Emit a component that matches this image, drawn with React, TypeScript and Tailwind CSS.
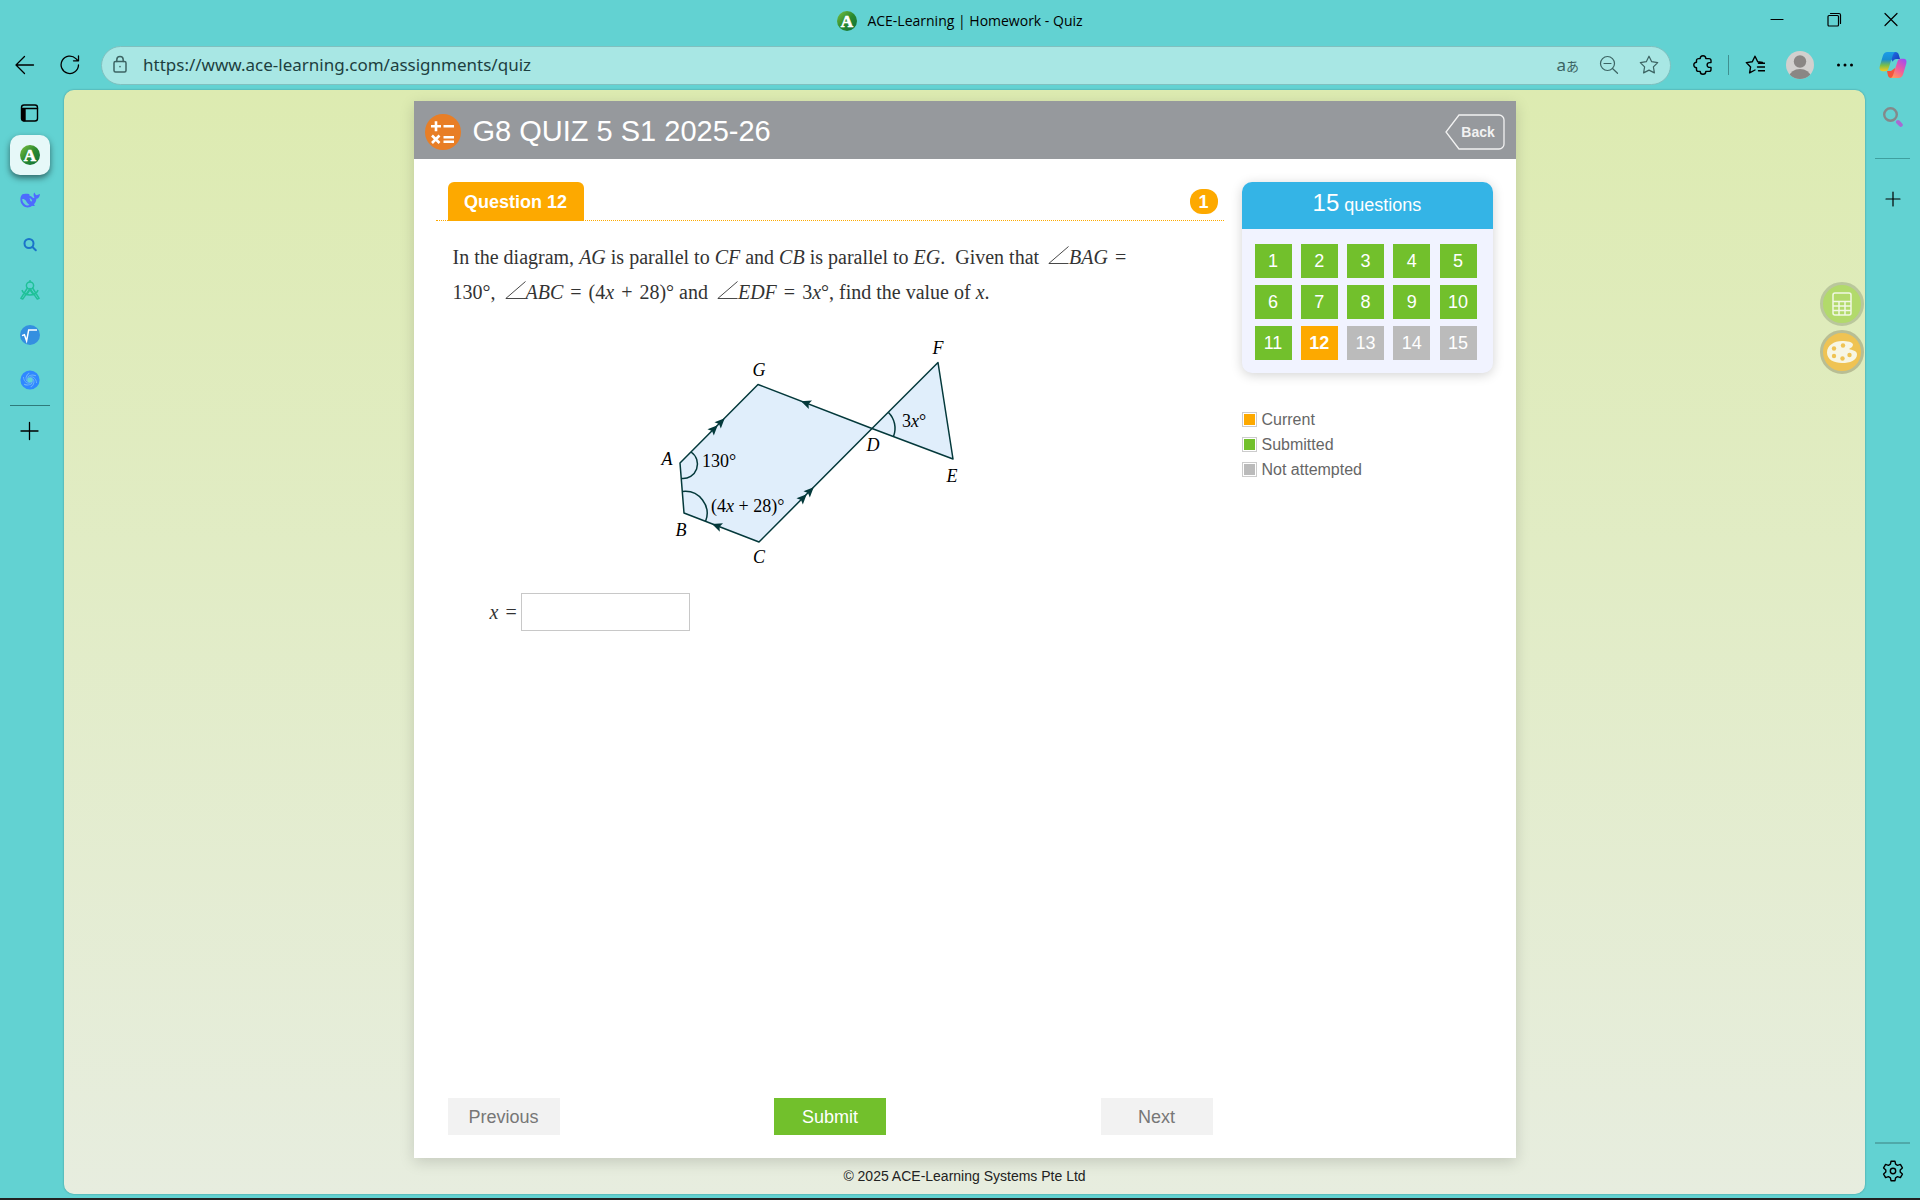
import React from "react";
import type { ReactNode } from "react";

type IconProps = { className?: string; children: ReactNode; box?: number; stroke?: number };

function Line({ className = "size-5", children, box = 20, stroke = 1.2 }: IconProps) {
  return (
    <svg
      className={className}
      viewBox={`0 0 ${box} ${box}`}
      fill="none"
      stroke="currentColor"
      strokeWidth={stroke}
      strokeLinecap="round"
      strokeLinejoin="round"
      aria-hidden="true"
    >
      {children}
    </svg>
  );
}

function AceLogo() {
  return (
    <svg className="size-5" viewBox="0 0 20 20" aria-hidden="true">
      <defs>
        <linearGradient id="ace" x1="0" y1="0" x2="1" y2="1">
          <stop offset="0" stopColor="#7cc142" />
          <stop offset="0.5" stopColor="#2b8a2e" />
          <stop offset="1" stopColor="#0b6e3c" />
        </linearGradient>
      </defs>
      <circle cx="10" cy="10" r="10" fill="url(#ace)" />
      <text
        x="10"
        y="15.5"
        textAnchor="middle"
        fontFamily="'Liberation Serif', serif"
        fontWeight="700"
        fontSize="17"
        fill="#ffffff"
        stroke="#ffffff"
        strokeWidth="0.6"
      >
        A
      </text>
    </svg>
  );
}

function Whale() {
  return (
    <svg className="size-5" viewBox="0 0 20 20" aria-hidden="true">
      <path
        fill="#4d6bfe"
        d="M2.400 4.300C.5 6.200 0 8.800.6 11.500c.8 3.500 3.700 6 7.200 5.900 1.700 0 3.100-.6 4.300-1.600.9.4 1.900.4 2.600 0 .3-.4-.2-.8-.9-1.200 1.500-1.600 2.400-3.500 2.600-5.800 1.900-.2 3.200-1.700 3.500-4.300 0-.4-.3-.5-.7-.3-.9.6-1.700.6-2.600 1.100-.9-.5-1.500-1.100-1.800-2.100-.2-.5-.6-.5-.9 0-.6 1.300-.4 2.900.7 4.100l-1.300 1c-1.300-1.300-2.300-2.200-4-2.700.3-.7.200-1.300-.3-1.500-2.300-.4-4.800-.7-6.600.2z"
      />
      <path
        fill="#62d2d2"
        d="M2.200 9c1.500-.3 2.600.3 3.500 1.600 1.100 1.700 2 3.500 3.900 4.500-1.300.6-2.700.5-4-.2C3.500 13.700 2.200 11.500 2.200 9zM9.300 8.300c1.100-.2 2.200.7 2.700 1.900.2.700-.1 1.300-.7 1.200-.8-.1-1.200-.8-1.200-1.600 0-.6-.3-1.100-.8-1.500z"
      />
    </svg>
  );
}

function Compass() {
  return (
    <Line stroke={1.5} className="size-5 text-[#1fc198]">
      <circle cx="10" cy="5.500" r="3.600" />
      <path d="M10 .6v1.200M7.400 8 .9 18.400l1.800.7L10 8.600l7.300 10.500 1.800-.7L12.600 8M2.200 10.600c1.200 2.700 4.300 4.300 7.800 4.300s6.600-1.600 7.800-4.300M7 14.100l3-4.300 3 4.300" />
    </Line>
  );
}

function RootIcon() {
  return (
    <svg className="size-5" viewBox="0 0 20 20" aria-hidden="true">
      <circle cx="10" cy="10" r="10" fill="#348fe0" />
      <path d="M2 10.600 4.400 9.800 6.600 16 8.700 4.900H17" fill="none" stroke="#fff" strokeWidth="1.500" />
    </svg>
  );
}

function Swirl() {
  return (
    <svg className="size-5" viewBox="0 0 20 20" aria-hidden="true">
      <circle cx="10" cy="10" r="6.200" fill="none" stroke="#2f88ff" strokeWidth="6.800" />
      {[0, 60, 120, 180, 240, 300].map((a) => (
        <path
          key={a}
          d="M10 7.200C12.500 6 16 7.800 16.600 13"
          transform={`rotate(${a} 10 10)`}
          fill="none"
          stroke="#6fb6f5"
          strokeWidth="0.900"
        />
      ))}
    </svg>
  );
}

function Copilot() {
  return (
    <svg className="size-7" viewBox="0 0 28 28" aria-hidden="true">
      <defs>
        <linearGradient id="cpA" x1="0" y1="0" x2="0" y2="1">
          <stop offset="0" stopColor="#1b9be8" />
          <stop offset="0.400" stopColor="#1a8fd0" />
          <stop offset="0.700" stopColor="#7bbf4a" />
          <stop offset="1" stopColor="#fbc81c" />
        </linearGradient>
        <linearGradient id="cpB" x1="0.800" y1="0" x2="0.200" y2="1">
          <stop offset="0" stopColor="#a24df0" />
          <stop offset="0.500" stopColor="#ee5aa0" />
          <stop offset="1" stopColor="#ff9a5a" />
        </linearGradient>
        <linearGradient id="cpC" x1="0" y1="0" x2="1" y2="1">
          <stop offset="0" stopColor="#1e78e6" />
          <stop offset="1" stopColor="#1731b8" />
        </linearGradient>
      </defs>
      <path fill="url(#cpC)" d="M13 1h3.500c1.700 0 2.800 1 3.300 2.800L21 8h-3.500c-2 0-3 .8-3.700 2.800L12 8z" />
      <path fill="#f2553d" d="M8 20h4l4-3 1 6-1.500 4H12c-1.700 0-2.600-1-3.100-2.700z" />
      <path
        fill="url(#cpA)"
        d="M8.500 1h8c-1.700.5-2.300 2-3 4.200L9.700 17c-.7 2.200-1.700 3.200-3.700 3.200H3.500C1 20.200 0 18.200.7 15.500L3.800 5C4.600 2.400 6 1 8.500 1z"
      />
      <path
        fill="url(#cpB)"
        d="M19.500 27h-8c1.700-.5 2.300-2 3-4.200L18.300 11c.7-2.200 1.700-3.200 3.700-3.200h2.500c2.500 0 3.500 2 2.800 4.700L24.200 23c-.8 2.600-2.200 4-4.700 4z"
      />
    </svg>
  );
}

const starPath = "M10 1.200l2.700 5.500 6 .9-4.300 4.300 1 6L10 15.100l-5.400 2.800 1-6L1.300 7.600l6-.9z";

function TitleBar() {
  return (
    <div className="grid h-10 grid-cols-[1fr_auto_1fr] items-center">
      <span />
      <div className="flex items-center gap-2.5 pt-0.5 text-sm text-black">
        <AceLogo />
        <span>ACE-Learning | Homework - Quiz</span>
      </div>
      <div className="flex justify-end">
        <button aria-label="Minimize" className="flex w-[57px] justify-center">
          <Line className="size-4" box={16}><path d="M2 7.500h12" /></Line>
        </button>
        <button aria-label="Restore" className="flex w-[57px] justify-center">
          <Line className="size-4" box={16}>
            <rect x="2" y="3.500" width="10.500" height="10.500" rx="1" />
            <path d="M4.500 1.500h8.500a1.500 1.500 0 0 1 1.500 1.500v8.500" />
          </Line>
        </button>
        <button aria-label="Close" className="flex w-[58px] justify-center">
          <Line className="size-4" box={16}><path d="M2 1.500l12 12M14 1.500l-12 12" /></Line>
        </button>
      </div>
    </div>
  );
}

function Toolbar() {
  return (
    <div className="flex h-[50px] items-center pr-[13px]">
      <button aria-label="Go back" className="flex w-[50px] justify-center">
        <Line stroke={1.300}><path d="M18.500 10H1.500M9.500 1.500 1 10l8.500 8.500" /></Line>
      </button>
      <button aria-label="Refresh" className="flex w-10 justify-center">
        <Line stroke={1.300}><path d="M18.500 10a8.700 8.700 0 1 1-2.600-6.400l2 2M18.500.8v5h-5" /></Line>
      </button>
      <div className="ml-[11px] flex h-[39px] flex-1 items-center rounded-full border border-[#7fc0bf] bg-[#a8e7e4] pl-2 pr-[11px] text-[#3c6463]">
        <Line stroke={1.500}>
          <rect x="4" y="6.500" width="12" height="10.500" rx="1.500" />
          <path d="M6.800 6.500V4.800a3.200 3.200 0 0 1 6.400 0v1.700M10 11.500v.2" />
        </Line>
        <input
          aria-label="Address"
          defaultValue="https://www.ace-learning.com/assignments/quiz"
          className="ml-[13px] h-8 min-w-0 flex-1 bg-transparent pb-0.5 font-['Noto_Sans',sans-serif] text-[17px] leading-7 text-[#1d3f3f] outline-none"
        />
        <div className="flex items-center gap-5">
          <button aria-label="Translate" className="flex items-baseline font-['Noto_Sans',sans-serif] text-[17px] leading-5">
            a<span className="font-['Noto_Sans_CJK_JP',sans-serif] text-[13px] leading-5">あ</span>
          </button>
          <button aria-label="Zoom out">
            <Line><circle cx="8.500" cy="8.500" r="7" /><path d="M13.500 13.500l5 4.800M5 8.500h7" /></Line>
          </button>
          <button aria-label="Add to favorites"><Line><path d={starPath} /></Line></button>
        </div>
      </div>
      <div className="flex items-center pl-[22px]">
        <button aria-label="Extensions">
          <Line stroke={1.400}>
            <path d="M7.200 3.600a2.800 2.800 0 0 1 5.600 0H16a2 2 0 0 1 2 2v2h-1.500a2.400 2.400 0 0 0 0 4.800H18v2a2 2 0 0 1-2 2h-3.200a2.800 2.800 0 0 1-5.600 0H5.500a2 2 0 0 1-2-2v-1.700a2.700 2.700 0 0 1 0-5.400V5.600a2 2 0 0 1 2-2z" />
          </Line>
        </button>
        <span className="ml-[15px] mr-4 h-5 w-px bg-[#3f9090]" />
        <button aria-label="Favorites">
          <Line stroke={1.400}>
            <path d="M13.500 8.200H20M12.500 12H20M13.500 15.800H20M17.500 7.500l-4.800-.8L10 1.200 7.300 6.700l-6 .9 4.300 4.300-1 6L10 15" />
          </Line>
        </button>
        <button aria-label="Profile" className="ml-[21px]">
          <svg className="size-7" viewBox="0 0 28 28" aria-hidden="true">
            <clipPath id="face"><circle cx="14" cy="14" r="14" /></clipPath>
            <g clipPath="url(#face)">
              <rect width="28" height="28" fill="#d2d0ce" />
              <circle cx="14" cy="10.500" r="6.200" fill="#8a8684" />
              <ellipse cx="14" cy="25.500" rx="10.500" ry="7.500" fill="#8a8684" />
            </g>
          </svg>
        </button>
        <button aria-label="Settings and more" className="ml-[21px]">
          <svg className="size-5" viewBox="0 0 20 20" fill="currentColor" aria-hidden="true">
            <circle cx="3.500" cy="10" r="1.500" /><circle cx="10" cy="10" r="1.500" /><circle cx="16.500" cy="10" r="1.500" />
          </svg>
        </button>
        <button aria-label="Copilot" className="ml-6"><Copilot /></button>
      </div>
    </div>
  );
}

function LeftRail() {
  const item = "flex h-[45px] w-full items-center justify-center";
  return (
    <nav aria-label="Tabs" className="flex w-16 shrink-0 flex-col items-center pr-1">
      <button aria-label="Tab actions" className={item}>
        <Line stroke={1.400}>
          <rect x="1.500" y="2" width="16" height="16" rx="2.500" />
          <path d="M5.500 5.500H17.500" />
          <path d="M2 5.500h3v12H3.500A1.500 1.500 0 0 1 2 16z" fill="currentColor" />
        </Line>
      </button>
      <button aria-label="ACE-Learning" className="flex size-10 items-center justify-center rounded-[10px] bg-[#e6f8f8] shadow-[0_3px_6px_rgba(0,0,0,0.5)]">
        <AceLogo />
      </button>
      <button aria-label="DeepSeek" className="mt-0.5 flex h-[45px] items-center"><Whale /></button>
      <button aria-label="Search" className={item}>
        <Line stroke={2} className="size-5 text-[#1b74c9]"><circle cx="9" cy="8.500" r="4.500" /><path d="M12.500 12l3.300 3.300" /></Line>
      </button>
      <button aria-label="Geometry" className={item}><Compass /></button>
      <button aria-label="Equations" className={item}><RootIcon /></button>
      <button aria-label="Assistant" className={item}><Swirl /></button>
      <span className="mt-[3px] h-px w-10 bg-[#2f7a7a]" />
      <button aria-label="New tab" className="mt-[15px]">
        <Line stroke={1.300}><path d="M9.500 1.500v17M1 10h17" /></Line>
      </button>
    </nav>
  );
}

function RightRail() {
  return (
    <aside aria-label="Sidebar" className="flex w-[55px] shrink-0 flex-col items-center">
      <button aria-label="Sidebar search" className="mt-[17px]">
        <svg className="size-5" viewBox="0 0 20 20" fill="none" aria-hidden="true">
          <circle cx="7.500" cy="7.500" r="6.300" stroke="#84898a" strokeWidth="2.400" />
          <path d="M15 15l2.800 2.800" stroke="#a66bd3" strokeWidth="4" strokeLinecap="round" />
        </svg>
      </button>
      <span className="mt-[31px] h-px w-[35px] bg-[#3f9f9f]" />
      <button aria-label="Customize sidebar" className="mt-8">
        <Line className="size-4" box={16}><path d="M8 1v14M1 8h14" /></Line>
      </button>
      <span className="mt-auto h-0.5 w-[35px] bg-[#4fa9a9]" />
      <button aria-label="Settings" className="mb-3 mt-4">
        <Line className="size-[22px]" box={22} stroke={1.400}>
          <path d="M9 1.300h4l.6 2.900 1.900 1.100 2.900-.9 2 3.500-2.200 2v2.200l2.200 2-2 3.500-2.900-.9-1.900 1.100-.6 2.900H9l-.6-2.900-1.900-1.100-2.900.9-2-3.500 2.200-2V9.900l-2.200-2 2-3.500 2.900.9 1.900-1.100z" />
          <circle cx="11" cy="11" r="2.700" />
        </Line>
      </button>
    </aside>
  );
}

function Angle({ children }: { children: string }) {
  return (
    <span className="whitespace-nowrap">
      <svg className="ml-1 inline-block h-[18px] w-[21px] align-baseline" viewBox="0 0 21 18" fill="none" stroke="#333" strokeWidth="0.900" role="img" aria-label="angle">
        <path d="M20.500.500.800 17.500H20.500" />
      </svg>
      <i>{children}</i>
    </span>
  );
}

function Op({ children }: { children: string }) {
  return <span className="mx-0.5">{children}</span>;
}

function Arrow({ x, y, a }: { x: number; y: number; a: number }) {
  return <path d="M1 0-9-4.500-7 0-9 4.500z" fill="#04393b" transform={`translate(${x} ${y}) rotate(${a})`} />;
}

const vertexLabels: [string, number, number][] = [
  ["G", 119, 46],
  ["F", 298, 24],
  ["A", 27, 135],
  ["B", 41, 206],
  ["C", 119, 233],
  ["D", 233, 121],
  ["E", 312, 152],
];

function Diagram() {
  return (
    <svg
      className="mx-auto mt-5 block h-[250px] w-[380px] font-['Liberation_Serif',serif]"
      viewBox="0 0 380 250"
      role="img"
      aria-label="Polygon AGDCB joined at D to triangle DFE"
    >
      <g fill="#e0eefb" stroke="#04393b" strokeWidth="1.500" strokeLinejoin="round">
        <path d="M40 133 118 54.500 232 98.500 119 212 44 183z" />
        <path d="M232 98.500 298 32.500 313 129z" />
        <g fill="none">
          <path d="M51 122a14.500 14.500 0 0 1-9.500 26.500" />
          <path d="M42.500 161.500a22 22 0 0 1 23 30" />
          <path d="M248.500 82.500a22.500 22.500 0 0 1 5 24" />
        </g>
      </g>
      <Arrow x={77} y={96} a={-45} />
      <Arrow x={84} y={89} a={-45} />
      <Arrow x={162} y={71.500} a={-159} />
      <Arrow x={73} y={194.300} a={-159} />
      <Arrow x={166} y={165} a={-45} />
      <Arrow x={173} y={158} a={-45} />
      <g fill="#000" fontSize="18">
        <g fontStyle="italic" textAnchor="middle">
          {vertexLabels.map(([t, x, y]) => (
            <text key={t} x={x} y={y}>{t}</text>
          ))}
        </g>
        <text x="62" y="137">130°</text>
        <text x="71" y="182">(4<tspan fontStyle="italic">x</tspan> + 28)°</text>
        <text x="262" y="97">3<tspan fontStyle="italic">x</tspan>°</text>
      </g>
    </svg>
  );
}

function Question() {
  return (
    <section className="flex min-w-0 flex-1 flex-col">
      <div className="flex h-[39px] items-stretch justify-between border-b border-dotted border-[#fda900] pl-3 pr-1.5">
        <h2 className="-mb-px flex w-[136px] items-center justify-center rounded-t-md bg-[#fda900] text-lg font-bold text-white">
          Question 12
        </h2>
        <span className="mt-[7px] flex h-[25px] w-7 items-center justify-center rounded-xl bg-[#fda900] text-lg font-bold text-white">1</span>
      </div>
      <p className="mt-[19px] pl-[17px] pr-16 font-['Liberation_Serif',serif] text-xl leading-[35px] text-[#333]">
        In the diagram, <i>AG</i> is parallel to <i>CF</i> and <i>CB</i> is parallel to <i>EG</i>.&nbsp; Given that{" "}
        <Angle>BAG</Angle> <Op>=</Op> 130°, <Angle>ABC</Angle> <Op>=</Op> (4<i>x</i> <Op>+</Op> 28)° and{" "}
        <Angle>EDF</Angle> <Op>=</Op> 3<i>x</i>°, find the value of <i>x</i>.
      </p>
      <Diagram />
      <div className="mt-[13px] flex items-center pl-[54px]">
        <label htmlFor="answer" className="mr-0.5 font-['Liberation_Serif',serif] text-xl text-[#333]">
          <i>x</i> <Op>=</Op>
        </label>
        <input id="answer" className="h-[38px] w-[169px] border border-[#c8c8c8] bg-white px-2 outline-none" />
      </div>
      <div className="mt-auto flex justify-between pl-3 pr-[11px] text-lg">
        <button className="h-[37px] w-28 bg-[#f2f2f2] text-[#777]">Previous</button>
        <button className="h-[37px] w-28 bg-[#72c02c] text-white">Submit</button>
        <button className="h-[37px] w-28 bg-[#f2f2f2] text-[#777]">Next</button>
      </div>
    </section>
  );
}

function cellColor(n: number) {
  if (n === 12) return "bg-[#fda900] font-bold";
  return n < 12 ? "bg-[#72c02c]" : "bg-[#bbbbbb]";
}

function QuestionList() {
  return (
    <aside className="w-[251px] shrink-0">
      <div className="overflow-hidden rounded-[10px] bg-[#f1f3ff] shadow-[0_2px_12px_rgba(0,0,0,0.18)]">
        <h3 className="flex h-[47px] items-center justify-center bg-[#34b4e6] pb-1.5 text-lg text-white">
          <span><span className="text-2xl">15</span> questions</span>
        </h3>
        <div className="grid grid-cols-[repeat(5,37px)] justify-between gap-y-[7px] pb-[13px] pl-[13px] pr-4 pt-[15px]">
          {Array.from({ length: 15 }, (_, i) => i + 1).map((n) => (
            <button key={n} className={`h-[34px] text-lg text-white ${cellColor(n)}`}>{n}</button>
          ))}
        </div>
      </div>
      <ul className="mt-[34px] text-base leading-[25px] text-[#666]">
        <li className="flex items-center gap-[5px]">
          <span className="size-[15px] border border-[#ccc] bg-[#fda900] bg-clip-content p-px" />Current
        </li>
        <li className="flex items-center gap-[5px]">
          <span className="size-[15px] border border-[#ccc] bg-[#72c02c] bg-clip-content p-px" />Submitted
        </li>
        <li className="flex items-center gap-[5px]">
          <span className="size-[15px] border border-[#ccc] bg-[#bbbbbb] bg-clip-content p-px" />Not attempted
        </li>
      </ul>
    </aside>
  );
}

function QuizHeader() {
  return (
    <header className="flex h-[58px] items-center bg-[#96999d] pl-[11px] pr-[11px] pt-1 text-white">
      <svg className="size-9" viewBox="0 0 36 36" aria-hidden="true">
        <circle cx="18" cy="18" r="18" fill="#e87e26" />
        <g stroke="#fff" strokeWidth="2.600" fill="none">
          <path d="M6 12.300h10M11 7.300v10M18.500 12.300h10.500M7 21.500l7.500 7.500M14.500 21.500l-7.500 7.500M18.500 23.300h10.500M18.500 27.800h10.500" />
        </g>
      </svg>
      <h1 className="ml-3 flex-1 pb-0.5 text-[29px] leading-9">G8 QUIZ 5 S1 2025-26</h1>
      <button aria-label="Back">
        <svg className="h-9 w-[60px]" viewBox="0 0 60 36" aria-hidden="true">
          <path d="M14 1h40a5 5 0 0 1 5 5v24a5 5 0 0 1-5 5H14L1 18z" fill="none" stroke="#f2f2f2" strokeWidth="1.300" />
          <text x="33" y="23" textAnchor="middle" fill="#f2f2f2" fontSize="14" fontWeight="700">Back</text>
        </svg>
      </button>
    </header>
  );
}

export default function App() {
  return (
    <div className="flex min-h-screen flex-col bg-[#62d2d2] font-['Open_Sans','Noto_Sans',sans-serif] text-black">
      <TitleBar />
      <Toolbar />
      <div className="flex flex-1">
        <LeftRail />
        <main className="relative flex min-w-0 flex-1 flex-col rounded-[10px] bg-linear-to-b from-[#ddebb1] to-[#e7eddf] pt-[11px] font-['Liberation_Sans',sans-serif] shadow-[0_0_2px_rgba(0,0,0,0.35)]">
          <article className="mx-auto flex w-full max-w-[1102px] flex-1 flex-col bg-white shadow-[0_4px_14px_rgba(0,0,0,0.15)]">
            <QuizHeader />
            <div className="flex flex-1 gap-[18px] pb-[23px] pl-[22px] pr-[23px] pt-[23px]">
              <Question />
              <QuestionList />
            </div>
          </article>
          <footer className="flex h-9 items-center justify-center text-sm text-[#222]">
            © 2025 ACE-Learning Systems Pte Ltd
          </footer>
          <div className="absolute right-px top-48 flex flex-col gap-1">
            <button aria-label="Calculator" className="flex size-11 items-center justify-center rounded-full border-[3px] border-[#bac79c] bg-[#b2da6b]">
              <svg className="h-6 w-5" viewBox="0 0 20 24" fill="none" stroke="#f1f8e4" strokeWidth="1.500" aria-hidden="true">
                <rect x="1" y="1" width="18" height="22" rx="2" />
                <path d="M1 9.500h18M1 14h18M1 18.500h18M7 9.500V23M13 9.500V23" />
              </svg>
            </button>
            <button aria-label="Drawing palette" className="flex size-11 items-center justify-center rounded-full border-[3px] border-[#b8be94] bg-[#efc353]">
              <svg className="h-[22px] w-[30px]" viewBox="0 0 30 22" aria-hidden="true">
                <path fill="#f7f6e4" d="M15 0C7 0 0 4.500 0 11.500S7 22 15 22s15-2.500 15-8.500C30 9 25 9.500 22 8c2-1.500 4-2 4-4.500C26 1 20 0 15 0z" />
                <g fill="#efc353">
                  <circle cx="7" cy="7.500" r="2.200" /><circle cx="16" cy="4.500" r="2.200" /><circle cx="7" cy="15" r="2.200" />
                  <circle cx="15.500" cy="17.500" r="2.200" /><circle cx="22.500" cy="14" r="2.200" />
                </g>
              </svg>
            </button>
          </div>
        </main>
        <RightRail />
      </div>
      <div className="h-1" />
      <div className="h-0.5 bg-[#222]" />
    </div>
  );
}
